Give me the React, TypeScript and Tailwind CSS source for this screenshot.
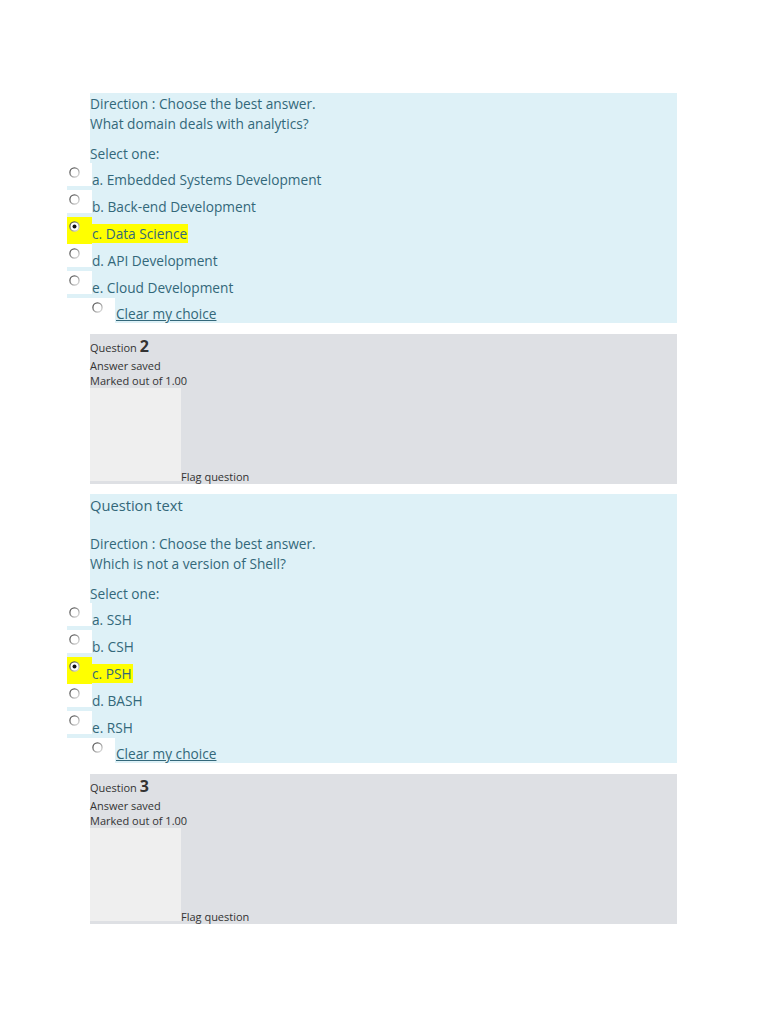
const TEAL = "text-[#33687a]";

const Radio = ({ checked = false }: { checked?: boolean }) => (
  <svg width="11" height="11" viewBox="0 0 11 11">
    <defs>
      <linearGradient id="ring" x1="0" y1="0" x2="1" y2="1">
        <stop offset="0" stopColor="#3a3a3a" />
        <stop offset="0.55" stopColor="#9a9a9a" />
        <stop offset="1" stopColor="#e6e6e6" />
      </linearGradient>
    </defs>
    <circle cx="5.5" cy="5.5" r="4.6" fill="#fff" stroke="url(#ring)" strokeWidth="1.3" />
    {checked && <circle cx="5.5" cy="5.5" r="2" fill="#111" />}
  </svg>
);

type Opt = { label: string; checked?: boolean };

const OptionRow = ({ opt }: { opt: Opt }) => (
  <div className="-ml-[23px] flex h-[27px] items-end bg-[#def1f7]">
    <div
      className={
        "self-start w-[25px] pl-[2px] pt-[4px] " +
        (opt.checked ? "h-[27px] bg-[#ffff00]" : "h-[23px] bg-white")
      }
    >
      <Radio checked={opt.checked} />
    </div>
    <span
      className={
        "relative -top-[1px] leading-[19px] text-[13.7px] " +
        TEAL +
        (opt.checked ? " bg-[#ffff00] pr-[1px]" : "")
      }
    >
      {opt.label}
    </span>
  </div>
);

const ClearRow = () => (
  <div className="flex h-[25px] items-start">
    <div className="h-[25px] w-[25px] bg-white pl-[2px] pt-[4px]">
      <Radio />
    </div>
    <span className={"ml-[1px] mt-[6px] text-[13.7px] leading-[19px] underline " + TEAL}>
      Clear my choice
    </span>
  </div>
);

const Answer = ({
  lead,
  question,
  options,
}: {
  lead?: string;
  question: string;
  options: Opt[];
}) => (
  <div className="w-[587px] bg-[#def1f7]">
    {lead && <div className={"text-[14.7px] leading-[22px] " + TEAL}>{lead}</div>}
    <div
      className={
        "relative top-[1px] text-[13.7px] leading-[20px] " + TEAL + (lead ? " mt-[17px]" : "")
      }
    >
      <div>Direction : Choose the best answer.</div>
      <div>{question}</div>
      <div className="mt-[10px]">Select one:</div>
    </div>
    {options.map((o) => (
      <OptionRow key={o.label} opt={o} />
    ))}
    <ClearRow />
  </div>
);

const Info = ({ n }: { n: number }) => (
  <div className="w-[587px] bg-[#dee0e4] pb-[3px] text-[#333]">
    <div className="pt-[2px] text-[11px] leading-[20px]">
      Question <span className="text-[16px] font-bold">{n}</span>
    </div>
    <div className="text-[11px] leading-[15px]">Answer saved</div>
    <div className="text-[11px] leading-[15px]">Marked out of 1.00</div>
    <div className="flex h-[93px] items-end">
      <div className="h-[93px] w-[91px] bg-[#efefef]" />
      <span className="relative top-[3px] text-[11px] leading-[14px]">Flag question</span>
    </div>
  </div>
);

export default function App() {
  return (
    <div
      className="min-h-[1024px] bg-white pl-[90px] pt-[93px]"
      style={{ fontFamily: '"Open Sans", "Noto Sans", sans-serif' }}
    >
      <Answer
        question="What domain deals with analytics?"
        options={[
          { label: "a. Embedded Systems Development" },
          { label: "b. Back-end Development" },
          { label: "c. Data Science", checked: true },
          { label: "d. API Development" },
          { label: "e. Cloud Development" },
        ]}
      />
      <div className="mt-[11px]">
        <Info n={2} />
      </div>
      <div className="mt-[10px]">
        <Answer
          lead="Question text"
          question="Which is not a version of Shell?"
          options={[
            { label: "a. SSH" },
            { label: "b. CSH" },
            { label: "c. PSH", checked: true },
            { label: "d. BASH" },
            { label: "e. RSH" },
          ]}
        />
      </div>
      <div className="mt-[11px]">
        <Info n={3} />
      </div>
    </div>
  );
}
